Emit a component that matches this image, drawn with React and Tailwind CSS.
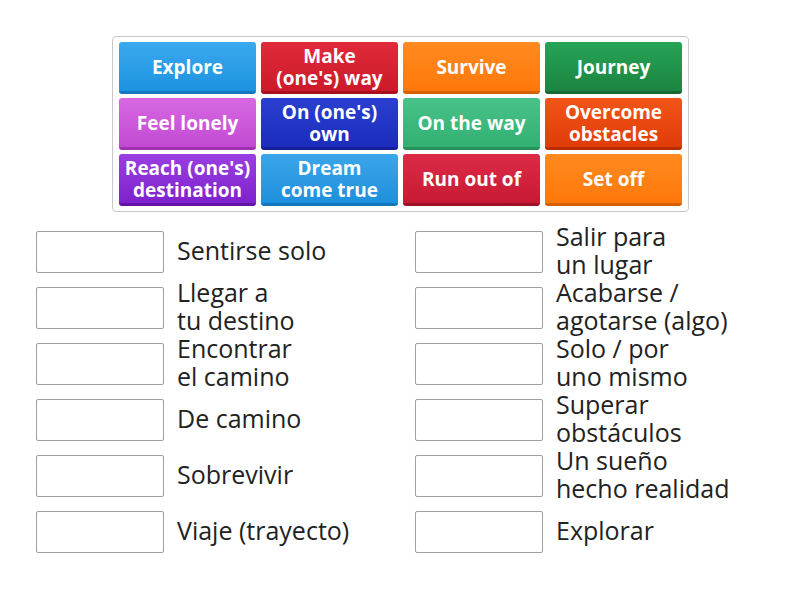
import React from "react";

const tiles = [
  { text: ["Explore"], bg: "bg-gradient-to-b from-[#3aa9ee] to-[#1c93e0] border-b-[#1478c0]" },
  { text: ["Make", "(one's) way"], bg: "bg-gradient-to-b from-[#e02a3a] to-[#cc1a2a] border-b-[#a8101e]" },
  { text: ["Survive"], bg: "bg-gradient-to-b from-[#ff8a1e] to-[#ff780a] border-b-[#d86000]" },
  { text: ["Journey"], bg: "bg-gradient-to-b from-[#26a457] to-[#1c8440] border-b-[#156a32]" },
  { text: ["Feel lonely"], bg: "bg-gradient-to-b from-[#d868e2] to-[#c24ad2] border-b-[#a032b0]" },
  { text: ["On (one's)", "own"], bg: "bg-gradient-to-b from-[#2a3fd0] to-[#1c2cbc] border-b-[#141f98]" },
  { text: ["On the way"], bg: "bg-gradient-to-b from-[#48c28a] to-[#32b072] border-b-[#24925a]" },
  { text: ["Overcome", "obstacles"], bg: "bg-gradient-to-b from-[#f25418] to-[#e03c08] border-b-[#b82c00]" },
  { text: ["Reach (one's)", "destination"], bg: "bg-gradient-to-b from-[#9a3ee2] to-[#7e22cc] border-b-[#6414a8]" },
  { text: ["Dream", "come true"], bg: "bg-gradient-to-b from-[#3aa5ea] to-[#1e90dc] border-b-[#1476bc]" },
  { text: ["Run out of"], bg: "bg-gradient-to-b from-[#dc2a46] to-[#c81a34] border-b-[#a01026]" },
  { text: ["Set off"], bg: "bg-gradient-to-b from-[#ff8a1e] to-[#ff780a] border-b-[#d86000]" },
];

const left = [
  ["Sentirse solo"],
  ["Llegar a", "tu destino"],
  ["Encontrar", "el camino"],
  ["De camino"],
  ["Sobrevivir"],
  ["Viaje (trayecto)"],
];

const right = [
  ["Salir para", "un lugar"],
  ["Acabarse /", "agotarse (algo)"],
  ["Solo / por", "uno mismo"],
  ["Superar", "obstáculos"],
  ["Un sueño", "hecho realidad"],
  ["Explorar"],
];

function Slot({ lines }) {
  return (
    <div className="flex items-center h-[42px]">
      <div className="w-[128px] h-[42px] border border-[#a0a0a0] rounded-[2px] bg-white shrink-0" />
      <div className="ml-[13px] mb-[4px] text-[25px] leading-[28px] text-[#222] whitespace-nowrap">
        {lines.map((l, i) => (
          <div key={i}>{l}</div>
        ))}
      </div>
    </div>
  );
}

export default function App() {
  return (
    <div
      className="w-[800px] h-[600px] bg-white relative"
      style={{ fontFamily: '"Open Sans", sans-serif' }}
    >
      <div className="pt-[36px] pl-[112px]">
        <div className="w-[577px] border border-[#c8c8c8] rounded-[4px] px-[6px] py-[5px] grid grid-cols-[repeat(4,137px)] gap-x-[5px] gap-y-[4px]">
          {tiles.map((t, i) => (
            <div
              key={i}
              className={`h-[52px] rounded-[3px] border-b-[3px] flex flex-col items-center justify-center text-white font-bold text-[19px] leading-[22px] whitespace-nowrap ${t.bg}`}
            >
              {t.text.map((l, j) => (
                <div key={j}>{l}</div>
              ))}
            </div>
          ))}
        </div>
      </div>
      <div className="flex pt-[19px]">
        <div className="ml-[36px] flex flex-col gap-[14px] w-[379px]">
          {left.map((l, i) => (
            <Slot key={i} lines={l} />
          ))}
        </div>
        <div className="flex flex-col gap-[14px]">
          {right.map((l, i) => (
            <Slot key={i} lines={l} />
          ))}
        </div>
      </div>
    </div>
  );
}
